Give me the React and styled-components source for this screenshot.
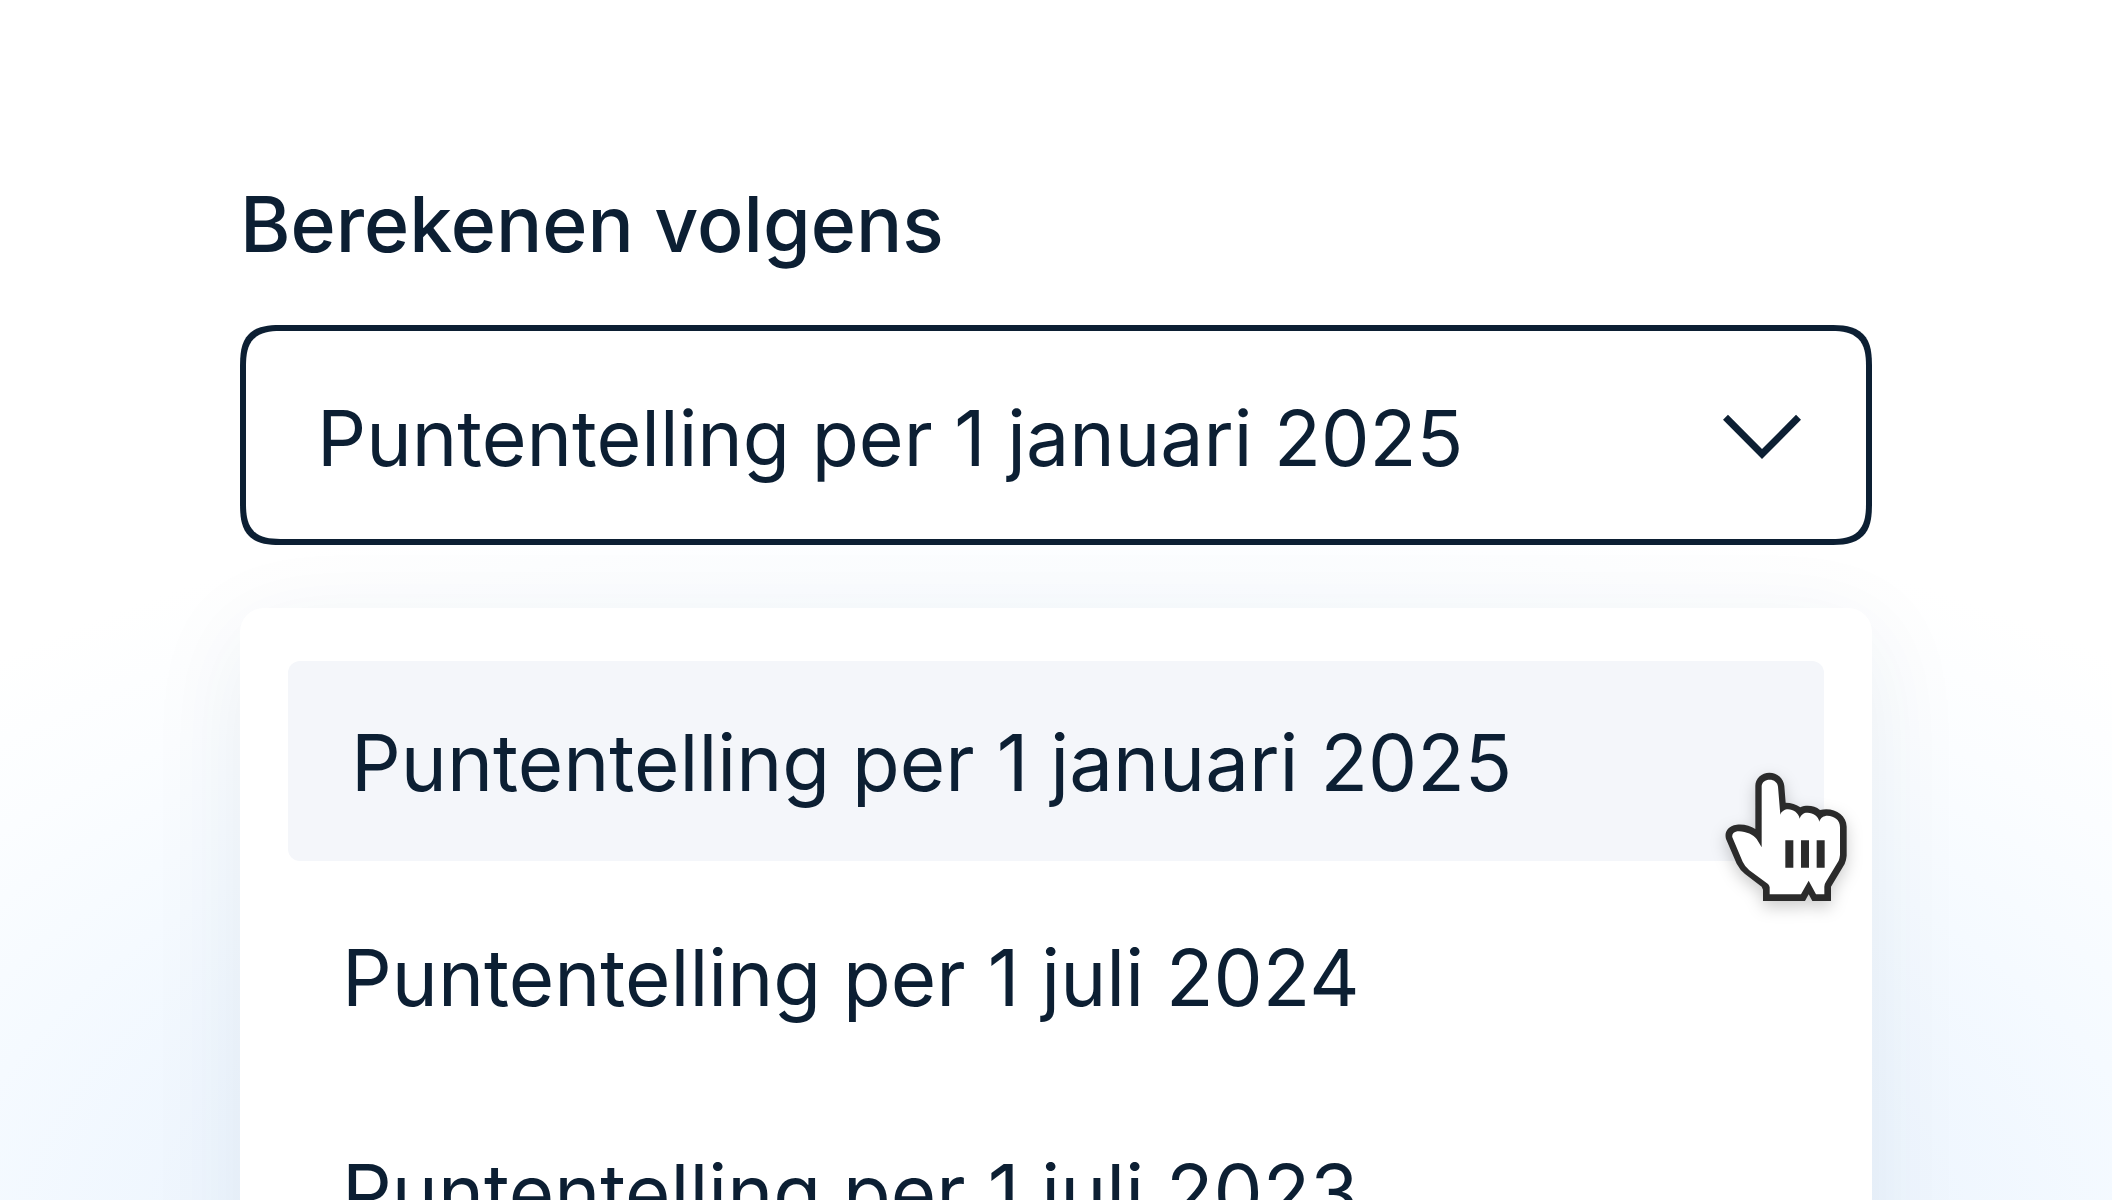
import { useState } from "react";
import styled, { createGlobalStyle } from "styled-components";

const periods = [
    "Puntentelling per 1 januari 2025",
    "Puntentelling per 1 juli 2024",
    "Puntentelling per 1 juli 2023",
];

function App(){
    const [period, setPeriod] = useState(periods[0]);

    return(
        <>
            <GlobalStyle />
            <Page>
                <Label htmlFor="period">Berekenen volgens</Label>
                <Field>
                    <Select id="period" value={period} onChange={(e) => setPeriod(e.target.value)}>
                        {periods.map((item) => (
                            <option key={item} value={item}>{item}</option>
                        ))}
                    </Select>
                    <Chevron viewBox="366 300 240 150" aria-hidden="true">
                        <path d="M376.500 322L486 432L595.500 322" />
                    </Chevron>
                </Field>
                <Menu role="listbox" aria-label="Berekenen volgens">
                    {periods.map((item) => (
                        <Option
                            key={item}
                            type="button"
                            role="option"
                            aria-selected={item === period}
                            $active={item === period}
                            onClick={() => setPeriod(item)}
                        >
                            {item}
                            {item === period && <Pointer />}
                        </Option>
                    ))}
                </Menu>
            </Page>
        </>
    )
};

function Pointer(){
    return(
        <Hand viewBox="90 84 396 420" aria-hidden="true">
            <path
                fill="#2b2b2b"
                d="M196 138C196 115 215 98 238 98C262 98 281 115 283 138L287 188C303 188 320 194 331 202C350 194 374 197 390 210C430 201 469 222 470 260V347Q469 360 464 372L423 440V483H367L356 463L345 483H219V449L215 440L165 402Q150 390 140 371L108 297C103 280 110 258 140 254C160 251 182 258 196 267Z"
            />
            <path
                fill="#fff"
                d="M215 138C216 126 226 119 239 119C252 119 263 127 264 140L271 224C274 214 285 208 294 208C310 208 326 219 329 236C333 222 344 217 353 218C370 219 385 228 388 245C391 233 402 227 412 227C434 228 450 240 450 262V345Q449 355 446 362L408 425Q403 432 403 440V463H378L356 422L333 463H239V442Q238 436 234 432L178 391Q165 380 158 365L127 292C125 284 130 276 142 274C165 272 190 284 200 297L215 322Z"
            />
            <path fill="#2b2b2b" d="M286 301h24v82h-24zM333 301h24v82h-24zM380 301h24v82h-24z" />
        </Hand>
    )
};

const GlobalStyle = createGlobalStyle`
    * {
        box-sizing:border-box;
    }
    body {
        margin:0;
        font-family:Inter, "Liberation Sans", sans-serif;
        color:#0c1f33;
    }
`
const Page = styled.main`
    display:flex;
    flex-direction:column;
    height:100vh;
    padding:176px 240px 0;
    overflow:hidden;
    background:radial-gradient(ellipse 76% 68% at 50% 106%, #e6f1fd 0%, #edf5fe 50%, #f5faff 70%, #fbfdff 85%, #fff 100%);
`
const Label = styled.label`
    font-size:77px;
    font-weight:500;
    line-height:96px;
`
const Field = styled.div`
    display:grid;
    align-items:center;
    margin-top:53px;
`
const Select = styled.select`
    grid-area:1 / 1;
    width:100%;
    height:220px;
    padding:6px 160px 0 71px;
    border:6px solid #0c1f33;
    border-radius:28px;
    background:#fff;
    color:inherit;
    font-family:inherit;
    font-size:77px;
    appearance:none;
    outline:none;

    @supports (corner-shape: squircle) {
        border-radius:44px;
        corner-shape:superellipse(1.6);
    }
`
const Chevron = styled.svg`
    grid-area:1 / 1;
    justify-self:end;
    width:80px;
    height:50px;
    margin-right:70px;
    fill:none;
    stroke:#0c1f33;
    stroke-width:21;
    pointer-events:none;
`
const Menu = styled.div`
    display:flex;
    flex-direction:column;
    flex-shrink:0;
    gap:15px;
    margin-top:63px;
    padding:53px 48px;
    border-radius:24px;
    background:#fff;
    box-shadow:0 24px 100px rgba(20, 50, 80, .07);
`
const Option = styled.button`
    position:relative;
    height:200px;
    padding:3px ${(props) => (props.$active ? "63px" : "54px")} 0;
    border:0;
    border-radius:12px;
    background:${(props) => (props.$active ? "#f4f6fa" : "transparent")};
    color:inherit;
    font-family:inherit;
    font-size:78px;
    text-align:left;
    cursor:pointer;
`
const Hand = styled.svg`
    position:absolute;
    top:107px;
    right:-28px;
    width:132px;
    height:140px;
    filter:drop-shadow(0 6px 8px rgba(0, 0, 0, .2));
`

export default App;
